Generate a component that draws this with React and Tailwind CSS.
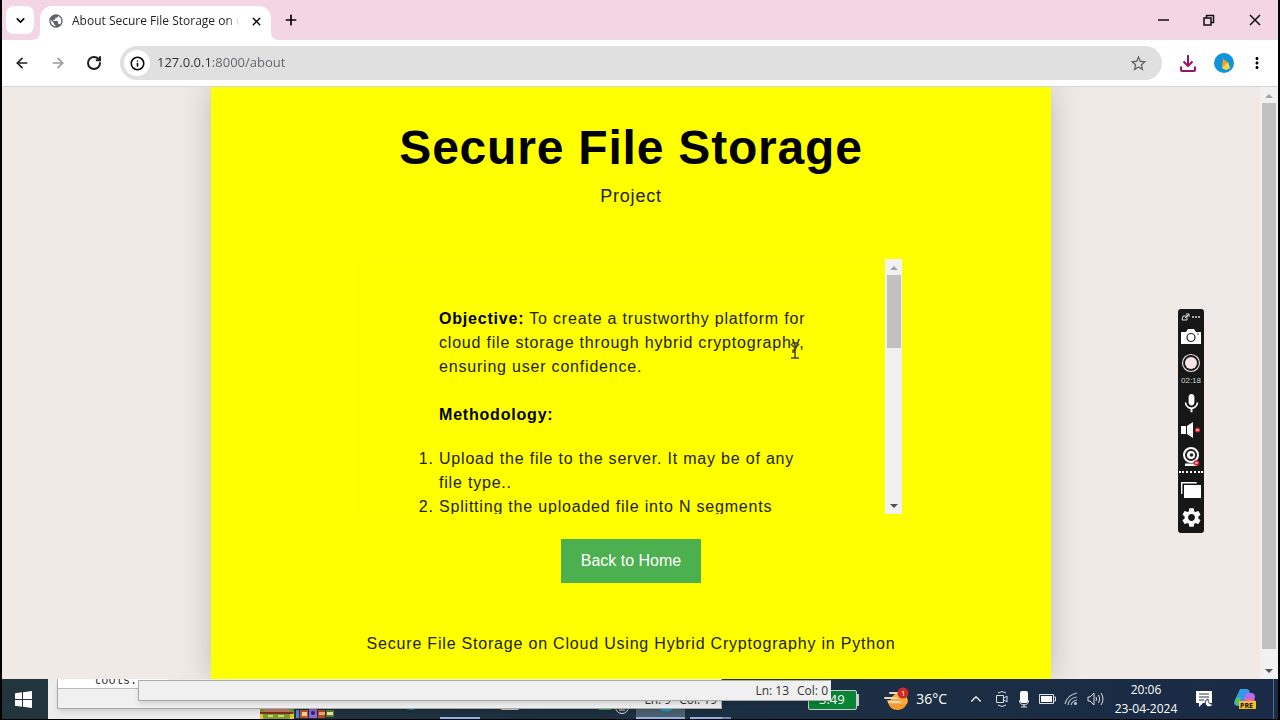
import {
  ArrowLeft,
  ArrowRight,
  ChevronDown,
  ChevronUp,
  Info,
  Plus,
  RotateCw,
  X,
} from "lucide-react";
import { MdOutlineStarBorder, MdMoreVert, MdPublic, MdSettings, MdMic } from "react-icons/md";

const steps = [
  "Upload the file to the server. It may be of any file type..",
  "Splitting the uploaded file into N segments",
];

function TabStrip() {
  return (
    <header className="flex h-10 shrink-0 items-end bg-[#f4d5e4]">
      <button aria-label="Search tabs" className="mb-[6px] ml-1 flex h-7 w-7 items-center justify-center rounded-lg bg-white">
        <ChevronDown size={13} strokeWidth={3} />
      </button>
      <div className="relative ml-[6px] flex h-[34px] w-[231px] items-center rounded-t-xl bg-white px-2 pb-1">
        <svg width="8" height="8" viewBox="0 0 8 8" className="absolute bottom-0 -left-2">
          <path d="M8 0v8H0q8 0 8-8z" fill="#fff" />
        </svg>
        <svg width="8" height="8" viewBox="0 0 8 8" className="absolute -right-2 bottom-0">
          <path d="M0 0v8h8q-8 0-8-8z" fill="#fff" />
        </svg>
        <MdPublic size={16} className="shrink-0 text-[#5f6368]" />
        <span className="ml-2 flex-1 overflow-hidden bg-linear-to-r from-[#1f1f1f] from-92% to-transparent bg-clip-text font-['Open_Sans','Noto_Sans',sans-serif] text-xs whitespace-nowrap text-transparent">
          About Secure File Storage on Cloud
        </span>
        <button aria-label="Close tab" className="ml-[10px]">
          <X size={13} strokeWidth={2.5} />
        </button>
      </div>
      <button aria-label="New tab" className="mb-3 ml-3">
        <Plus size={16} strokeWidth={2.5} />
      </button>
      <div className="mb-[13px] ml-auto flex items-center gap-8 pr-4">
        <button aria-label="Minimize">
          <svg width="14" height="14" viewBox="0 0 14 14" stroke="#111" strokeWidth="1.5">
            <path d="M2 7h11" />
          </svg>
        </button>
        <button aria-label="Restore">
          <svg width="14" height="14" viewBox="0 0 14 14" fill="none" stroke="#111" strokeWidth="1.5">
            <path d="M2 5h7v7H2zM4.5 5V2.5h7v7H9" />
          </svg>
        </button>
        <button aria-label="Close window">
          <svg width="14" height="14" viewBox="0 0 14 14" stroke="#111" strokeWidth="1.5">
            <path d="M2 2l10 10M12 2L2 12" />
          </svg>
        </button>
      </div>
    </header>
  );
}

function Toolbar() {
  return (
    <nav className="flex h-[47px] shrink-0 items-center border-b border-[#d5d5d5] bg-white pl-3">
      <button aria-label="Back" className="text-[#1f1f1f]">
        <ArrowLeft size={16} strokeWidth={2.5} />
      </button>
      <button aria-label="Forward" className="ml-5 text-[#9a9a9a]">
        <ArrowRight size={16} strokeWidth={2.5} />
      </button>
      <button aria-label="Reload" className="ml-5 text-[#1f1f1f]">
        <RotateCw size={16} strokeWidth={3} />
      </button>
      <div className="ml-[18px] flex h-[34px] flex-1 items-center rounded-full bg-[#e0e0e0] pr-[14px] pl-1">
        <span className="flex h-[26px] w-[26px] items-center justify-center rounded-full bg-white">
          <Info size={15} strokeWidth={2.5} />
        </span>
        <input
          aria-label="Address"
          defaultValue="127.0.0.1:8000/about"
          className="ml-[7px] min-w-0 flex-1 bg-linear-to-r from-[#303030] from-[54px] to-[#5f6368] to-[54px] bg-clip-text font-['Open_Sans','Noto_Sans',sans-serif] text-[13px] text-transparent outline-none"
        />
        <button aria-label="Bookmark this page" className="text-[#5f6368]">
          <MdOutlineStarBorder size={19} />
        </button>
      </div>
      <button aria-label="Downloads" className="ml-[18px]">
        <svg width="16" height="17" viewBox="0 0 16 17" fill="none" stroke="#98126b" strokeWidth="2">
          <path d="M8 0v11M3.500 6.500L8 11l4.500-4.500M1 11.500V15q0 1 1 1h12q1 0 1-1v-3.500" />
        </svg>
      </button>
      <button aria-label="Profile" className="ml-[18px]">
        <svg width="20" height="20" viewBox="0 0 20 20">
          <circle cx="10" cy="10" r="10" fill="#0d94dc" />
          <path d="M8 15l1-10 2 3 1-1 4 8-4 2z" fill="#f5a21c" />
          <path d="M8 15l6-6 2 6-4 2z" fill="#fbd34d" />
        </svg>
      </button>
      <button aria-label="Menu" className="mr-3 ml-[14px]">
        <MdMoreVert size={18} />
      </button>
    </nav>
  );
}

function Arrow({ up }) {
  return (
    <svg width="8" height="5" viewBox="0 0 8 5" className="shrink-0">
      <path d={up ? "M0 5l4-4 4 4z" : "M0 0l4 4 4-4z"} fill={up ? "#a3a3a3" : "#505050"} />
    </svg>
  );
}

function AboutPage() {
  return (
    <main className="mx-auto h-full max-w-[840px] flex-1 overflow-hidden bg-[#ff0] px-5 font-['Liberation_Sans',Arial,sans-serif] tracking-wider text-[#222200] shadow-[0_0_30px_rgba(0,0,0,0.2)]">
      <h1 className="pt-[33px] text-center text-5xl leading-14 font-bold text-black">Secure File Storage</h1>
      <p className="mt-[6px] text-center text-lg leading-7">Project</p>
      <section className="mx-auto mt-12 flex h-[257px] max-w-[544px] border border-[#fbfb10]">
        <div className="flex-1 overflow-y-auto px-[79px] pt-12 [scrollbar-width:none]">
          <p>
            <strong className="text-black">Objective:</strong> To create a trustworthy platform for cloud file storage
            through hybrid cryptography, ensuring user confidence.
          </p>
          <p className="mt-6">
            <strong className="text-black">Methodology:</strong>
          </p>
          <ol className="mt-5 list-decimal">
            {steps.map((step) => (
              <li key={step}>{step}</li>
            ))}
          </ol>
        </div>
        <div className="flex w-[17px] flex-col items-center bg-[#f1f1f1]">
          <div className="flex h-4 items-center"><Arrow up /></div>
          <div className="h-[73px] w-[14px] bg-[#c1c1c1]" />
          <div className="mt-auto flex h-4 items-center"><Arrow /></div>
        </div>
      </section>
      <div className="mt-6 text-center">
        <a href="/" className="inline-block bg-[#4caf50] px-5 py-[10px] tracking-normal text-white">Back to Home</a>
      </div>
      <footer className="mt-[49px] text-center">Secure File Storage on Cloud Using Hybrid Cryptography in Python</footer>
    </main>
  );
}

function Recorder() {
  return (
    <aside className="absolute top-[222px] right-[74px] flex w-[26px] flex-col items-center rounded-[3px] bg-[#171717] py-1 text-white">
      <svg width="20" height="8" viewBox="0 0 20 8" fill="none" stroke="#ddd">
        <path d="M2 3h4v4H1zM4 5l4-4M5 1h3v3" />
        <path d="M11 4h9" strokeWidth="1.500" strokeDasharray="2 1" />
      </svg>
      <button aria-label="Screenshot" className="mt-2">
        <svg width="20" height="15" viewBox="0 0 20 15">
          <path d="M0 3h5l2-3h6l2 3h5v12H0z" fill="#fff" />
          <circle cx="10" cy="8.500" r="4" fill="#fff" stroke="#222" strokeWidth="1.200" />
          <circle cx="17" cy="5" r=".7" fill="#222" />
        </svg>
      </button>
      <button aria-label="Stop recording" className="mt-[9px]">
        <svg width="20" height="20" viewBox="0 0 20 20">
          <circle cx="10" cy="10" r="8.500" fill="none" stroke="#ddd" strokeWidth="1.200" />
          <circle cx="10" cy="10" r="6" fill="#fce4e8" />
        </svg>
      </button>
      <span className="mt-[2px] font-['Liberation_Sans',Arial,sans-serif] text-[8px] leading-3 text-[#c8d8d8]">02:18</span>
      <button aria-label="Microphone" className="mt-[5px]"><MdMic size={23} /></button>
      <button aria-label="Speaker" className="mt-[7px]">
        <svg width="20" height="16" viewBox="0 0 20 16">
          <path d="M0 4h5v8H0zM6 4l6-4v16l-6-4z" fill="#fff" />
          <circle cx="16.500" cy="8" r="2.500" fill="#e0203c" />
          <path d="M15.500 7l2 2m0-2l-2 2" stroke="#fff" strokeWidth=".8" />
        </svg>
      </button>
      <button aria-label="Webcam" className="mt-[9px]">
        <svg width="20" height="20" viewBox="0 0 20 20">
          <circle cx="10" cy="8" r="7" fill="#222" stroke="#fff" strokeWidth="2" />
          <circle cx="10" cy="8" r="4" fill="#fff" />
          <circle cx="10.500" cy="8" r="1.800" fill="#222" />
          <path d="M4 16.500h12v2.500H4z" fill="#fff" />
          <circle cx="15.500" cy="16" r="2.800" fill="#e0203c" />
          <path d="M14.500 15l2 2m0-2l-2 2" stroke="#fff" strokeWidth=".8" />
        </svg>
      </button>
      <div className="mt-1 w-6 border-t-2 border-dotted border-white" />
      <button aria-label="Windows" className="mt-2">
        <svg width="20" height="18" viewBox="0 0 20 18">
          <path d="M.7 13V1.700h15" fill="none" stroke="#fff" strokeWidth="1.400" />
          <path d="M3 4h17v13H3z" fill="#fff" />
        </svg>
      </button>
      <button aria-label="Settings" className="mt-[7px]"><MdSettings size={23} /></button>
    </aside>
  );
}

function BackWindows() {
  return (
    <div className="absolute top-0 left-[46px] h-10 w-[212px] bg-[#ededed]">
      <div className="absolute top-0 left-[9px] h-[30px] w-[665px] border border-t-0 border-[#aaa] bg-[#f0f0f0] shadow-md">
        <div className="h-[10px] w-[110px] overflow-hidden border-b border-[#bbb] bg-white pl-9 font-['Liberation_Mono',monospace] text-xs leading-[4px] text-[#333]">
          tools.
        </div>
        <div className="absolute right-1 bottom-0 flex gap-2 font-['Open_Sans','Noto_Sans',sans-serif] text-xs text-[#333]">
          <span>Ln: 9</span>
          <span>Col: 19</span>
        </div>
      </div>
      <div className="absolute top-px left-[90px] flex h-[21px] w-[693px] items-center justify-end gap-2 border border-[#aaa] border-r-[#f0f0f0] bg-[#f0f0f0] pt-px pr-[2px] font-['Open_Sans','Noto_Sans',sans-serif] text-xs text-[#333] shadow-md">
        <span>Ln: 13</span>
        <span>Col: 0</span>
      </div>
    </div>
  );
}

function Taskbar() {
  return (
    <footer className="relative flex h-10 shrink-0 items-center bg-linear-to-r from-[#22353c] to-[#192b46] font-['Open_Sans','Noto_Sans',sans-serif] text-white">
      <button aria-label="Start" className="flex h-full w-[46px] items-center justify-center pr-1">
        <svg width="17" height="17" viewBox="0 0 17 17" fill="#fff">
          <path d="M0 2.300L7 1.300V8H0zM8 1.200L17 0v8H8zM0 9h7v6.700L0 14.700zM8 9h9v8l-9-1.200z" />
        </svg>
      </button>
      <svg width="76" height="10" viewBox="0 0 76 10" className="ml-[211px] self-end">
        <path d="M0 0h35v10H0z" fill="#7d9b2e" />
        <path d="M5 0h25v3H5z" fill="#c47c62" />
        <path d="M1 3h33v2H1z" fill="#7a302a" />
        <path d="M0 5h4v5H0zM31 5h4v5h-4z" fill="#e6c33c" />
        <path d="M9 7h5M19 7h6" stroke="#d4dc61" strokeWidth="2" />
        <path d="M37 1h3v8h-3z" fill="#5088d8" />
        <path d="M41 1h8v8h-8z" fill="#c4562e" />
        <path d="M43 3h5v4h-5z" fill="#f5d6a0" />
        <path d="M50 0h8v9h-8z" fill="#8f6ad0" />
        <circle cx="54" cy="4" r="2" fill="#342070" />
        <path d="M59 1h7v8h-7z" fill="#b64b28" />
        <path d="M60 3h6v3h-6z" fill="#efab6c" />
        <path d="M67 1h8v7h-8z" fill="#527d38" />
        <path d="M68 3h6v3h-6z" fill="#eee4a0" />
      </svg>
      <svg width="370" height="11" viewBox="0 0 370 11" className="ml-[66px] self-end">
        <path d="M235 0h49v11h-49z" fill="#4c6270" />
        <path d="M3 0h14q-6 4-14 0z" fill="#1784d8" />
        <path d="M98 0h22l-3 2h-16z" fill="#ccc" />
        <path d="M197 2q6-5 14 0z" fill="#2aa860" />
        <circle cx="221" cy="-1" r="6.500" fill="#27353b" stroke="#ddd" />
        <path d="M218 2h6" stroke="#ddd" />
        <path d="M257 0h16q-7 7-16 0z" fill="#1b9fc4" />
        <path d="M39 9h40v2H39zM235 9h49v2h-49zM289 9h32v2h-32z" fill="#92b0e8" />
        <path d="M321 9h9v2h-9z" fill="#6e86b8" />
      </svg>
      <div className="absolute top-[11px] left-[806px] flex h-5 w-[49px] items-center rounded-xs border border-[#ccc] bg-[#078535] pl-[10px] text-[13px]">
        3:49
        <span className="absolute -right-[3px] h-3 w-[3px] bg-[#ccc]" />
      </div>
      <BackWindows />
      <div className="ml-auto flex items-center pr-[21px]">
        <svg width="26" height="24" viewBox="0 0 26 24">
          <path d="M3 13h21c-1 6-5 10-10.500 10S5 20 3 13z" fill="#f59a2e" />
          <path d="M7 12c2-5 8-8 13-5 4 2 4 7 3 10H6z" fill="#f9ab3e" />
          <path d="M6 6h9M1 11h12M5 15h11" stroke="#ead6c0" strokeWidth="2" strokeLinecap="round" />
          <circle cx="19" cy="6" r="5.500" fill="#cf2a24" />
          <text x="17" y="9" fontSize="8" fill="#fff">1</text>
        </svg>
        <span className="ml-[6px] text-sm leading-5">36°C</span>
        <ChevronUp size={18} strokeWidth={1.5} className="ml-5" />
        <svg width="14" height="18" viewBox="0 0 14 18" fill="none" stroke="#ddd" className="ml-[10px]">
          <path d="M1.500 5.500h7v7h-7zM9 8l3-2v6l-3-2M3 3q4-3 8 0M3 15q4 3 8 0" />
        </svg>
        <svg width="10" height="17" viewBox="0 0 10 17" className="ml-[10px]">
          <rect x="1" y="0" width="8" height="12" rx="2" fill="#fff" />
          <path d="M0 9q1 5 5 5t5-5M5 13v3M2 16h6" fill="none" stroke="#ddd" />
        </svg>
        <svg width="17" height="10" viewBox="0 0 17 10" className="ml-[10px]">
          <path d="M.5.5h14v9H.5zM15 3h1.500v4H15" fill="none" stroke="#ddd" />
          <path d="M2 2h11v6H2z" fill="#fff" />
        </svg>
        <svg width="15" height="14" viewBox="0 0 15 14" fill="none" stroke="#aebac4" strokeWidth="1.200" className="ml-2">
          <path d="M1 12Q3 3 13 1M4 13q1-7 9-8M7 13q1-4 6-5" />
          <circle cx="11.500" cy="11.500" r="1" fill="#fff" />
        </svg>
        <svg width="17" height="14" viewBox="0 0 17 14" fill="none" stroke="#ddd" className="ml-2">
          <path d="M1 5h2l4-4v12L3 9H1zM9 5q1 2 0 4M11.500 3q2.500 4 0 8M14 1q4 6 0 12" />
        </svg>
        <div className="ml-[10px] w-[64px] text-center text-xs leading-[19px] whitespace-nowrap">
          <div>20:06</div>
          <div>23-04-2024</div>
        </div>
        <svg width="18" height="17" viewBox="0 0 18 17" className="ml-[18px]">
          <path d="M0 0h16v12H7l-4 4v-4H0z" fill="#fff" />
          <path d="M3 3h10M3 6h10M3 9h5" stroke="#253650" />
          <path d="M12 8a4 4 0 1 0 5 5q-5 1-5-5z" fill="#fff" stroke="#253650" />
        </svg>
        <svg width="24" height="23" viewBox="0 0 24 23" className="ml-[19px]">
          <path d="M7 1h7q2 0 3 4l-4 2-4 11H5q-4 0-4-4z" fill="#2d9be8" />
          <path d="M3 10l5-1-2 8H4q-3-1-1-7z" fill="#55c35c" />
          <path d="M13 5h5q4 0 4 4l-2 8H9z" fill="#b76af0" />
          <path d="M14 10l8 2-2 6H9z" fill="#f06a9c" />
          <rect x="6" y="13" width="17" height="8" fill="#f8bd22" />
          <text x="7" y="20" fontSize="7" fontWeight="bold" fill="#111">PRE</text>
        </svg>
      </div>
      <span className="absolute right-1 h-full w-px bg-[#5a6a7c]" />
    </footer>
  );
}

export default function App() {
  return (
    <div className="flex h-screen flex-col overflow-hidden border-x-2 border-b border-black bg-white">
      <TabStrip />
      <Toolbar />
      <div className="relative flex min-h-0 flex-1 bg-[#efeae6]">
        <div className="flex min-w-0 flex-1 overflow-hidden">
          <AboutPage />
        </div>
        {/* text cursor */}
        <svg width="10" height="18" viewBox="0 0 10 18" fill="none" stroke="#4a4020" className="absolute top-[255px] left-1/2 ml-[150px]">
          <path d="M1 2l4 4 4-4M2 1h6M5 6v10M2 10h3M1 16h8" strokeWidth="1.500" />
        </svg>
        <Recorder />
        <div className="flex w-[18px] flex-col items-center bg-[#f1f1f1]">
          <div className="flex h-4 items-center"><Arrow up /></div>
          <div className="w-[14px] flex-1 bg-[#c1c1c1]" />
          <div className="mt-[14px] flex h-4 items-center"><Arrow /></div>
        </div>
      </div>
      <Taskbar />
    </div>
  );
}
